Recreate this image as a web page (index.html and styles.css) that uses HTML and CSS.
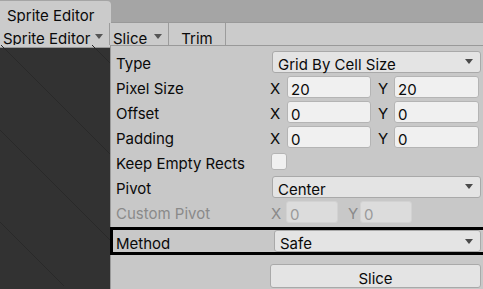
FILE: index.html
```html
<!DOCTYPE html>
<html>
<head>
<meta charset="utf-8">
<title>Sprite Editor</title>
<link rel="stylesheet" href="styles.css">
</head>
<body>
<div class="window">
  <div class="tabbar">
    <div class="tab">Sprite Editor</div>
  </div>
  <div class="toolbar">
    <div class="tb-item tb-mode"><span class="tb-text">Sprite Editor</span><span class="tb-arrow"></span></div>
    <div class="tb-item tb-slice"><span class="tb-text">Slice</span><span class="tb-arrow"></span></div>
    <div class="tb-item tb-button"><span class="tb-text">Trim</span></div>
  </div>
  <div class="main">
    <div class="canvas">
      <svg width="110" height="241" viewBox="0 0 110 241">
        <g stroke="#292929" stroke-width="1">
          <line x1="92" y1="0" x2="392" y2="300"/>
          <line x1="1" y1="0" x2="301" y2="300"/>
          <line x1="-85" y1="0" x2="215" y2="300"/>
          <line x1="-177" y1="0" x2="123" y2="300"/>
        </g>
      </svg>
    </div>
    <div class="slice-panel">
      <div class="row">
        <div class="label">Type</div>
        <div class="dropdown"><span class="value">Grid By Cell Size</span><span class="arrow"></span></div>
      </div>
      <div class="row">
        <div class="label">Pixel Size</div>
        <div class="vec">
          <div class="half"><span class="axis">X</span><span class="num">20</span></div>
          <div class="half"><span class="axis">Y</span><span class="num">20</span></div>
        </div>
      </div>
      <div class="row">
        <div class="label">Offset</div>
        <div class="vec">
          <div class="half"><span class="axis">X</span><span class="num">0</span></div>
          <div class="half"><span class="axis">Y</span><span class="num">0</span></div>
        </div>
      </div>
      <div class="row">
        <div class="label">Padding</div>
        <div class="vec">
          <div class="half"><span class="axis">X</span><span class="num">0</span></div>
          <div class="half"><span class="axis">Y</span><span class="num">0</span></div>
        </div>
      </div>
      <div class="row">
        <div class="label">Keep Empty Rects</div>
        <div><span class="checkbox"></span></div>
      </div>
      <div class="row">
        <div class="label">Pivot</div>
        <div class="dropdown"><span class="value">Center</span><span class="arrow"></span></div>
      </div>
      <div class="row disabled">
        <div class="label">Custom Pivot</div>
        <div class="vec small">
          <div class="half"><span class="axis">X</span><span class="num">0</span></div>
          <div class="half"><span class="axis">Y</span><span class="num">0</span></div>
        </div>
      </div>
      <div class="row focused">
        <div class="label">Method</div>
        <div class="dropdown"><span class="value">Safe</span><span class="arrow"></span></div>
      </div>
      <div class="row button-row">
        <div class="label"></div>
        <div class="button">Slice</div>
      </div>
    </div>
  </div>
</div>
</body>
</html>
```

FILE: styles.css
```css
body {
	margin: 0;
	font-family: "Inter", "Noto Sans", sans-serif;
	font-size: 15px;
	color: #0a0a0a;
	background-color: #a5a5a5;
}
.window {
	width: 483px;
	height: 289px;
	overflow: hidden;
	display: flex;
	flex-direction: column;
}

/* window tab */
.tabbar {
	height: 25px;
	border-bottom: 1px solid #999999;
	display: flex;
	align-items: flex-end;
	background-color: #a5a5a5;
}
.tab {
	height: 22px;
	line-height: 29px;
	margin-bottom: -1px;
	width: 104px;
	padding-left: 7px;
	background-color: #cbcbcb;
	border-top-right-radius: 4px;
}

/* toolbar */
.toolbar {
	height: 22px;
	display: flex;
	background-color: #cbcbcb;
}
.tb-item {
	display: flex;
	align-items: flex-start;
	justify-content: space-between;
	padding: 0 6px 0 3px;
	border-right: 1px solid #9c9c9c;
}
.tb-text {
	line-height: 32px;
}
.tb-mode {
	width: 100px;
}
.tb-slice {
	width: 49px;
}
.tb-button {
	width: 56px;
	padding: 0;
	justify-content: center;
}
.tb-arrow {
	align-self: center;
	margin-top: 4px;
	width: 0;
	height: 0;
	border-left: 4px solid transparent;
	border-right: 4px solid transparent;
	border-top: 5px solid #555555;
}

/* sprite area + slice window */
.main {
	flex: 1;
	display: flex;
}
.canvas {
	width: 110px;
	background-color: #323232;
	box-shadow: inset 0 2px 0 #cbcbcb, inset 0 3px 0 #9a9a9a;
}
.canvas svg {
	display: block;
}
.slice-panel {
	flex: 1;
	background-color: #c8c8c8;
	border-top: 1px solid #999999;
	border-left: 1px solid #999999;
	padding: 3px 2px 0 5px;
}
.row {
	height: 25px;
	display: flex;
	align-items: center;
}
.label {
	width: 154px;
	flex: none;
	line-height: 20px;
	padding-top: 5px;
}
.row > div + div {
	flex: 1;
}
.dropdown {
	margin-left: 2px;
	height: 20px;
	padding: 0 7px 0 5px;
	background-color: #e4e4e4;
	border: 1px solid #a9a9a9;
	border-radius: 3px;
	display: flex;
	align-items: flex-start;
	justify-content: space-between;
}
.value {
	line-height: 25px;
}
.arrow {
	align-self: center;
	width: 0;
	height: 0;
	border-left: 4.5px solid transparent;
	border-right: 4.5px solid transparent;
	border-top: 5px solid #4a4a4a;
}
.vec {
	display: flex;
	gap: 7px;
	margin-right: 2px;
}
.half {
	flex: 1;
	display: flex;
	align-items: center;
}
.axis {
	width: 17px;
	flex: none;
	line-height: 20px;
	padding-top: 5px;
}
.half + .half .axis {
	width: 16px;
}
.num {
	flex: 1;
	height: 20px;
	line-height: 25px;
	padding-left: 3px;
	background-color: #f0f0f0;
	border: 1px solid #b4b4b4;
	border-radius: 3px;
}
.checkbox {
	display: block;
	margin-left: 1px;
	width: 14px;
	height: 15px;
	background-color: #f0f0f0;
	border: 1px solid #b4b4b4;
	border-radius: 3px;
}

/* greyed out row */
.disabled {
	color: #8a8a8a;
}
.vec.small {
	gap: 9px;
	flex: none;
}
.small .half {
	flex: none;
}
.small .axis {
	width: 15px;
	padding-left: 1px;
}
.small .half + .half .axis {
	width: 12px;
}
.small .num {
	flex: none;
	width: 47px;
	background-color: #dcdcdc;
	border-color: #d2d2d2;
	color: #9a9a9a;
}

/* keyboard focus outline */
.focused {
	height: 22px;
	margin: 3px -6px 0 -6px;
	padding-left: 3px;
	border: 3px solid #000000;
}
.focused .label {
	width: 156px;
}
.focused .dropdown {
	margin-right: 3px;
}

.button-row {
	margin-top: 9px;
	align-items: flex-start;
}
.button {
	height: 22px;
	line-height: 27px;
	text-align: center;
	background-color: #e4e4e4;
	border: 1px solid #a9a9a9;
	border-radius: 3px;
}
```
